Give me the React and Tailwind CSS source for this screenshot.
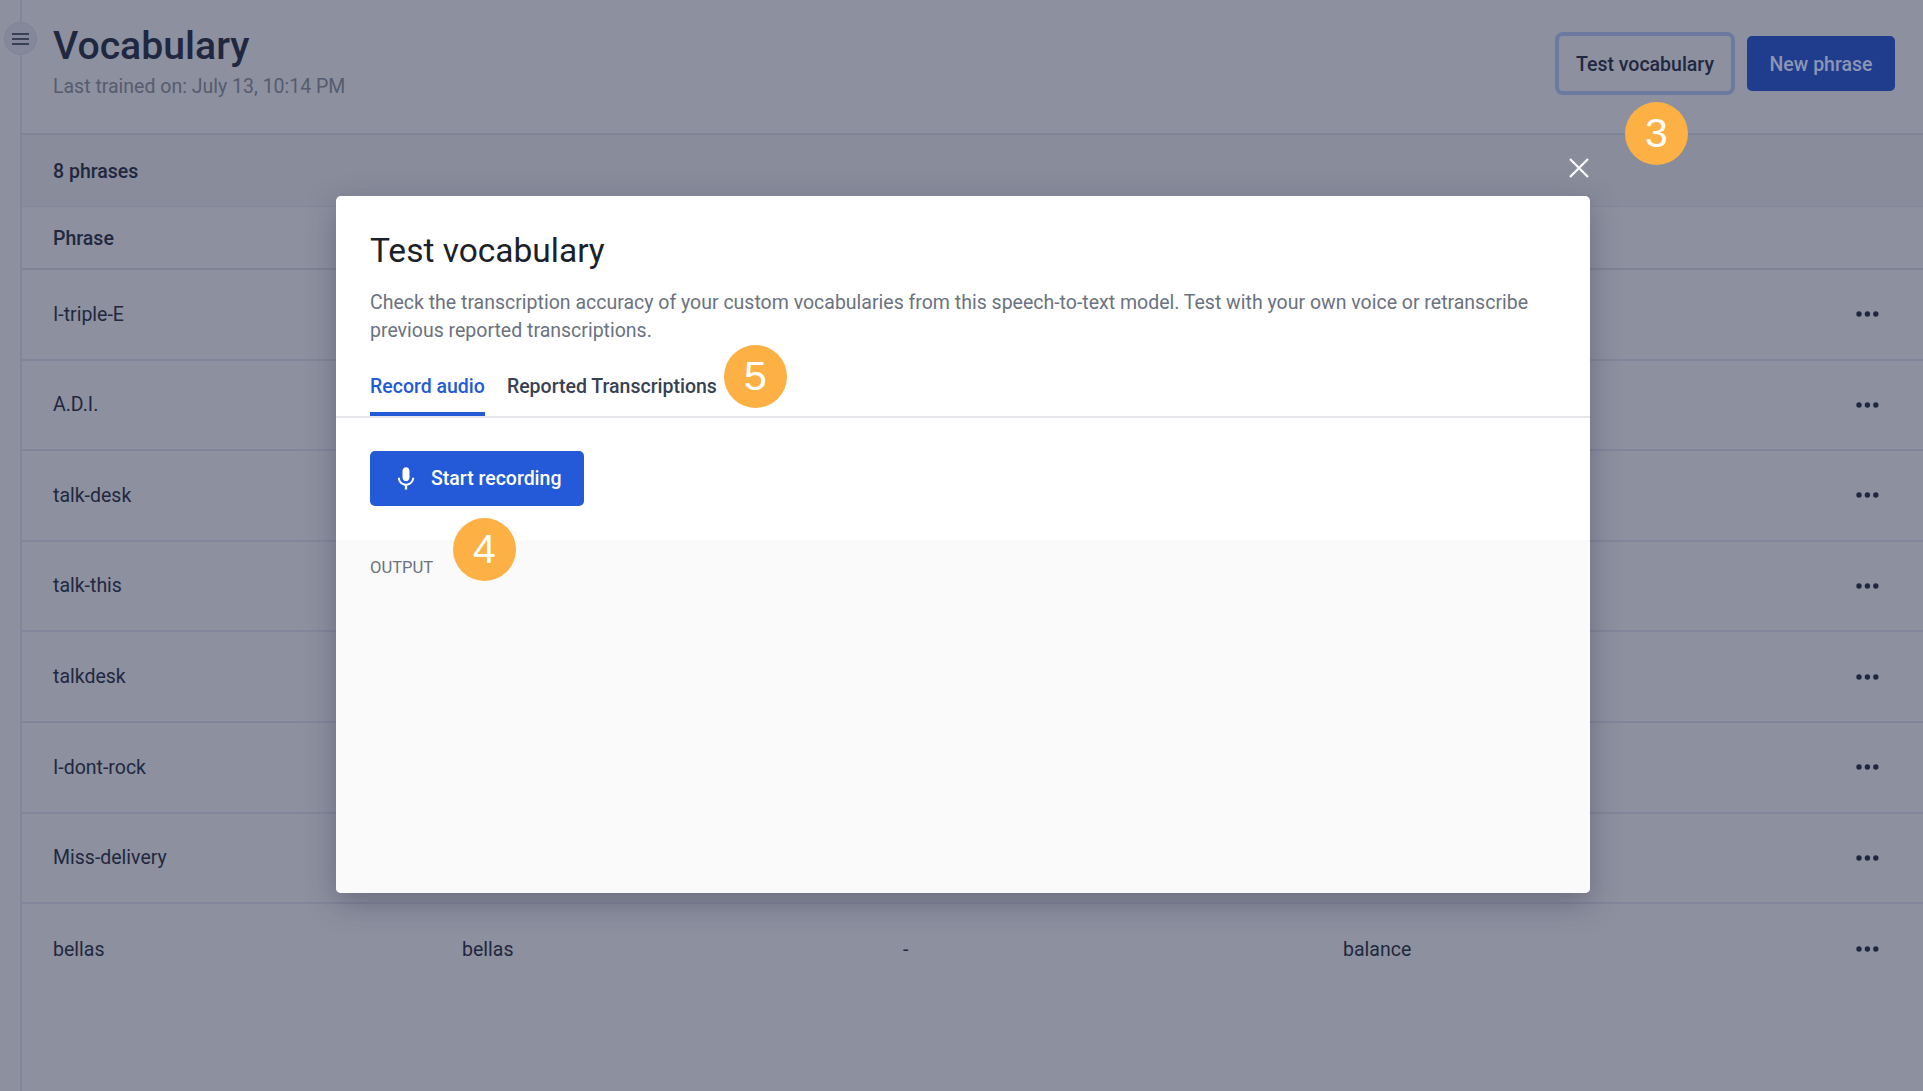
import React from "react";

const rows = [
  { phrase: "I-triple-E" },
  { phrase: "A.D.I." },
  { phrase: "talk-desk" },
  { phrase: "talk-this" },
  { phrase: "talkdesk" },
  { phrase: "I-dont-rock" },
  { phrase: "Miss-delivery" },
  { phrase: "bellas", sounds: "bellas", other: "-", replaces: "balance", last: true },
];

const Dots = () => (
  <svg width="24" height="6" viewBox="0 0 24 6" className="text-[#1f2840]" fill="currentColor">
    <circle cx="3" cy="3" r="2.7" />
    <circle cx="11.4" cy="3" r="2.7" />
    <circle cx="19.8" cy="3" r="2.7" />
  </svg>
);

const Badge = ({ n, className }) => (
  <div
    className={`absolute w-[63px] h-[63px] rounded-full bg-[#fdb043] text-white text-[41px] leading-none flex items-center justify-center font-['Liberation_Sans',sans-serif] ${className}`}
  >
    {n}
  </div>
);

const App = () => {
  return (
    <div className="relative h-[1091px] w-full overflow-hidden bg-[#8d909f] font-['Roboto',sans-serif] text-[#1f2840]">
      <div className="ml-[20px] h-full border-l-2 border-[#82869a]">
        {/* Header */}
        <div className="flex h-[135px] items-start justify-between border-b-2 border-[#7f8395] pl-[31px] pr-[28px]">
          <div className="pt-[22px]">
            <h1 className="text-[39.2px] leading-[48px] font-medium">Vocabulary</h1>
            <p className="mt-[4px] text-[19.5px] leading-[26px] text-[#565c6e]">Last trained on: July 13, 10:14 PM</p>
          </div>
          <div className="flex items-center gap-[12px] pt-[32px]">
            <button className="h-[63px] w-[180px] rounded-[8px] border-4 border-[#6b7a9e] pt-[2px] text-[19.5px] font-medium">
              Test vocabulary
            </button>
            <button className="h-[55px] w-[148px] rounded-[5px] bg-[#203d8d] pt-[2px] text-[19.5px] font-medium text-[#8d95b5]">
              New phrase
            </button>
          </div>
        </div>

        {/* Table */}
        <div className="flex h-[72px] items-center border-b border-[#82869a] bg-[#888c9b] pl-[31px] pt-[2px] text-[19.5px] font-medium">
          8 phrases
        </div>
        <div className="flex h-[63px] items-center border-b-2 border-[#7f8395] pl-[31px] pt-[2px] text-[19.5px] font-medium">
          Phrase
        </div>
        {rows.map((row) => (
          <div
            key={row.phrase}
            className={`grid h-[90.6px] grid-cols-[409px_441px_440px_1fr_auto] items-center pl-[31px] pr-[43px] text-[19.5px] ${
              row.last ? "" : "border-b-2 border-[#82869a]"
            }`}
          >
            <span>{row.phrase}</span>
            <span>{row.sounds}</span>
            <span>{row.other}</span>
            <span>{row.replaces}</span>
            <Dots />
          </div>
        ))}
      </div>

      {/* Sidebar toggle */}
      <button className="absolute left-[4px] top-[22px] flex h-[33px] w-[33px] items-center justify-center rounded-full border border-[#7f8395] bg-[#84889a]">
        <svg width="17" height="12" viewBox="0 0 17 12" stroke="#1f2840" strokeWidth="1.5">
          <path d="M0 1h17M0 6h17M0 11h17" />
        </svg>
      </button>

      {/* Modal */}
      <div className="absolute left-[336px] top-[196px] flex h-[697px] w-[1254px] flex-col overflow-hidden rounded-[5px] bg-white shadow-[0_10px_30px_rgba(40,44,66,0.35)]">
        <div className="px-[34px] pt-[30px]">
          <h2 className="text-[33.5px] leading-[50px] text-[#1b2129]">Test vocabulary</h2>
          <p className="mt-[13px] text-[19.5px] leading-[28px] text-[#6b7280]">
            Check the transcription accuracy of your custom vocabularies from this speech-to-text model. Test with your own voice or retranscribe previous reported transcriptions.
          </p>
        </div>
        <div className="mt-[25px] flex h-[48px] gap-[22px] border-b-2 border-[#e5e7eb] px-[34px] text-[19.5px] font-medium">
          <div className="h-[46px] border-b-4 border-[#245ad7] pt-[2px] text-[#245ad7]">Record audio</div>
          <div className="pt-[2px] text-[#374151]">Reported Transcriptions</div>
        </div>
        <div className="h-[122px] px-[34px] pt-[33px]">
          <button className="flex h-[55px] w-[214px] items-center gap-[11px] rounded-[5px] bg-[#245ad7] pl-[22px] text-[19.5px] font-medium text-white">
            <svg className="h-[28px] w-[28px]" viewBox="0 0 24 24" fill="currentColor">
              <path d="M12 14c1.66 0 2.99-1.34 2.99-3L15 5c0-1.66-1.34-3-3-3S9 3.34 9 5v6c0 1.66 1.34 3 3 3zm5.3-3c0 3-2.54 5.1-5.3 5.1S6.7 14 6.7 11H5c0 3.41 2.72 6.23 6 6.72V21h2v-3.28c3.28-.48 6-3.3 6-6.72h-1.7z" />
            </svg>
            Start recording
          </button>
        </div>
        <div className="flex-1 bg-[#fafafa] px-[34px] pt-[18px] text-[16.6px] leading-[20px] text-[#6b7280]">OUTPUT</div>
      </div>

      {/* Close */}
      <svg className="absolute left-[1569px] top-[158px]" width="20" height="20" viewBox="0 0 20 20" stroke="white" strokeWidth="2.2">
        <path d="M1 1l18 18M19 1L1 19" />
      </svg>

      <Badge n="3" className="left-[1625px] top-[102px]" />
      <Badge n="5" className="left-[724px] top-[345px]" />
      <Badge n="4" className="left-[453px] top-[518px]" />
    </div>
  );
};

export default App;
